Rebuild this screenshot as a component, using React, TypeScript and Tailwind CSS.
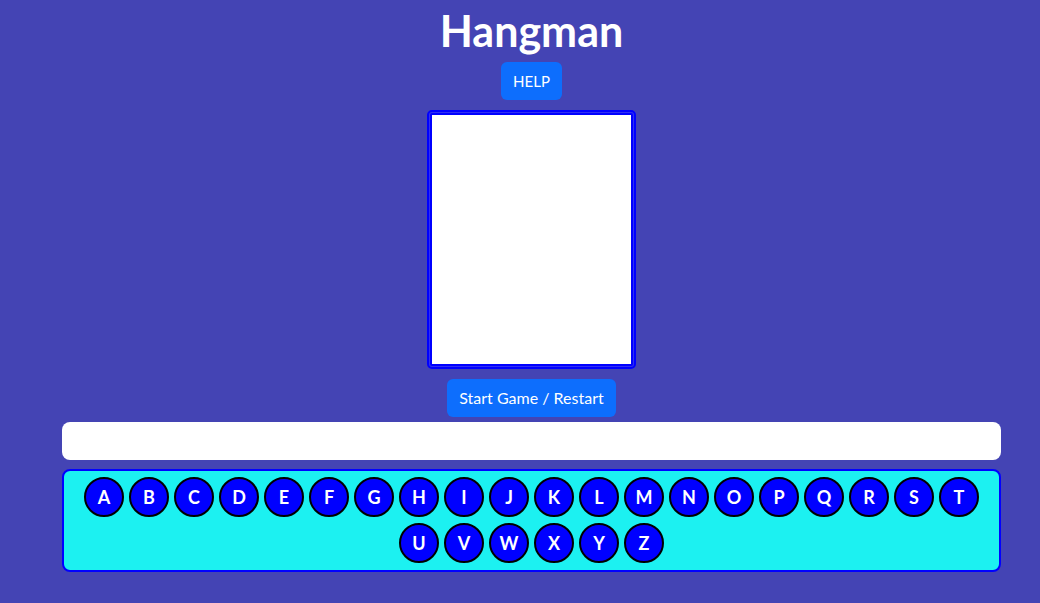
import React, { useState } from "react";

const LETTERS = "ABCDEFGHIJKLMNOPQRSTUVWXYZ".split("");

export default function App() {
  const [used, setUsed] = useState<string[]>([]);

  return (
    <div
      className="min-h-[603px] w-full bg-[#4444b4] pl-[23px] pt-[5px]"
      style={{ fontFamily: "Lato, 'Noto Sans', sans-serif" }}
    >
      <div className="flex flex-col items-center">
        <h1 className="text-[43px] font-bold leading-[52px] text-white">Hangman</h1>

        <button className="mt-[5px] h-[38px] rounded-md bg-[#0d6efd] px-3 text-[15px] text-white">
          HELP
        </button>

        {/* Drawing area */}
        <div className="mt-[10px] rounded-[5px] border-2 border-[#0000ff] bg-[#3030f0] p-px">
          <div className="rounded-[2px] border-2 border-[#0000ff] bg-white">
            <div className="h-[249px] w-[199px]" />
          </div>
        </div>

        <button
          className="mt-[10px] h-[38px] rounded-md bg-[#0d6efd] px-3 text-[16px] text-white"
          onClick={() => setUsed([])}
        >
          Start Game / Restart
        </button>

        {/* Word display */}
        <div className="mt-[5px] h-[38px] w-[939px] rounded-lg bg-white" />

        {/* Keyboard */}
        <div className="mt-[9px] flex w-[939px] flex-wrap justify-center gap-x-[5px] gap-y-[6px] rounded-lg border-2 border-[#0000ff] bg-[#1cf1f1] px-[6px] pb-[7px] pt-[6px]">
          {LETTERS.map((l) => (
            <button
              key={l}
              onClick={() => setUsed([...used, l])}
              className="flex h-[40px] w-[40px] items-center justify-center rounded-full border-2 border-black bg-[#0000ff] text-[18px] font-bold text-white"
            >
              {l}
            </button>
          ))}
        </div>
      </div>
    </div>
  );
}
